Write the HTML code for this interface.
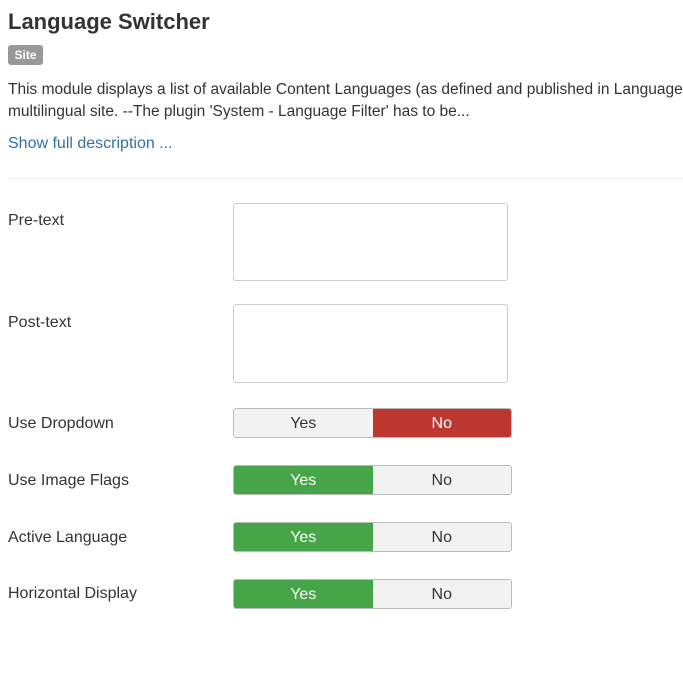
<!DOCTYPE html>
<html><head><style>
body{margin:0;background:#fff;font-family:"Liberation Sans",sans-serif;color:#333;width:683px;height:698px;overflow:hidden;position:relative}
.a{position:absolute;white-space:nowrap}
h1{position:absolute;left:8px;top:9px;margin:0;font-size:22px;font-weight:bold;color:#333}
.badge{left:8px;top:45px;width:35px;height:20px;background:#999;border-radius:3px;color:#fff;font-weight:bold;font-size:12px;line-height:20px;text-align:center}
.desc{left:8px;top:79px;width:675px;overflow:hidden;font-size:15.5px;line-height:22px}
.link{left:8px;top:135px;font-size:16px;color:#3071a9}
.hr{left:8px;top:178px;width:675px;height:1px;background:#eee}
.lbl{left:8px;font-size:16px}
.ta{left:233px;width:273px;border:1px solid #ccc;border-radius:3px;background:#fff}
.sw{left:233px;width:277px;height:28px;border:1px solid #bbb;border-radius:3px;display:flex;overflow:hidden;font-size:16px}
.sw div{flex:1;text-align:center;line-height:29px;background:#f2f2f2;color:#333}
.sw .r{background:#bd362f;color:#fff}
.sw .g{background:#46a546;color:#fff}
</style></head><body>
<h1>Language Switcher</h1>
<div class="a badge">Site</div>
<div class="a desc">This module displays a list of available Content Languages (as defined and published in Language Manager Content tab) to switch between them<br>multilingual site. --The plugin 'System - Language Filter' has to be...</div>
<div class="a link">Show full description ...</div>
<div class="a hr"></div>
<div class="a lbl" style="top:212px">Pre-text</div>
<div class="a ta" style="top:203px;height:76px"></div>
<div class="a lbl" style="top:314px">Post-text</div>
<div class="a ta" style="top:304px;height:77px"></div>
<div class="a lbl" style="top:415px">Use Dropdown</div>
<div class="a sw" style="top:408px"><div>Yes</div><div class="r">No</div></div>
<div class="a lbl" style="top:472px">Use Image Flags</div>
<div class="a sw" style="top:465px"><div class="g">Yes</div><div>No</div></div>
<div class="a lbl" style="top:529px">Active Language</div>
<div class="a sw" style="top:522px"><div class="g">Yes</div><div>No</div></div>
<div class="a lbl" style="top:585px">Horizontal Display</div>
<div class="a sw" style="top:579px"><div class="g">Yes</div><div>No</div></div>
</body></html>
